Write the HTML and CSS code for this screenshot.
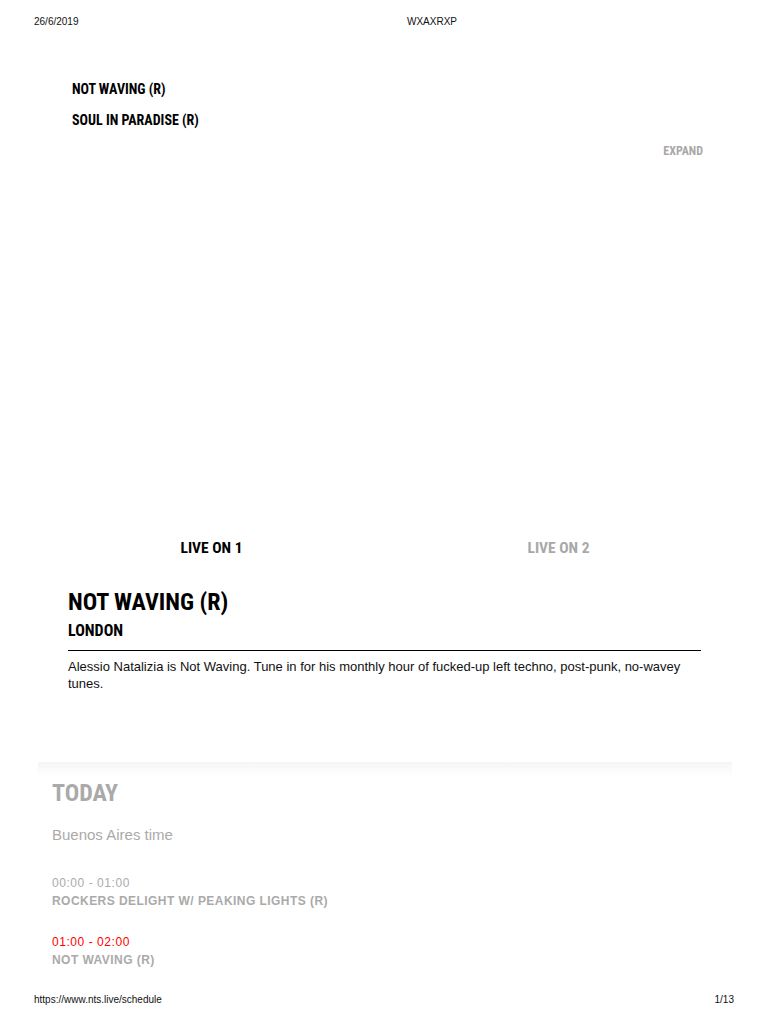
FILE: index.html
```html
<!DOCTYPE html>
<html lang="en">
<head>
<meta charset="utf-8">
<title>WXAXRXP</title>
<link rel="stylesheet" href="styles.css">
</head>
<body>
<header class="print-header">
  <span class="ph-date">26/6/2019</span>
  <span class="ph-title">WXAXRXP</span>
</header>

<nav class="nav-list">
  <div class="nav-item">NOT WAVING (R)</div>
  <div class="nav-item">SOUL IN PARADISE (R)</div>
</nav>
<div class="expand-row"><span class="expand">EXPAND</span></div>

<div class="player-space"></div>

<div class="live-tabs">
  <div class="live-tab active">LIVE ON 1</div>
  <div class="live-tab">LIVE ON 2</div>
</div>

<section class="show">
  <h1 class="show-title">NOT WAVING (R)</h1>
  <div class="show-location">LONDON</div>
  <p class="show-desc">Alessio Natalizia is Not Waving. Tune in for his monthly hour of fucked-up left techno, post-punk, no-wavey tunes.</p>
</section>

<section class="schedule">
  <h2 class="sched-day">TODAY</h2>
  <div class="sched-tz">Buenos Aires time</div>
  <div class="slot">
    <div class="slot-time">00:00 - 01:00</div>
    <div class="slot-name">ROCKERS DELIGHT W/ PEAKING LIGHTS (R)</div>
  </div>
  <div class="slot">
    <div class="slot-time now">01:00 - 02:00</div>
    <div class="slot-name">NOT WAVING (R)</div>
  </div>
</section>

<footer class="print-footer">
  <span>https://www.nts.live/schedule</span>
  <span>1/13</span>
</footer>
</body>
</html>
```

FILE: styles.css
```css
html, body {
  margin: 0;
  padding: 0;
  background: #fff;
}
body {
  width: 768px;
  height: 1024px;
  overflow: hidden;
  font-family: "Liberation Sans", Arial, sans-serif;
  color: #000;
}

.print-header {
  display: flex;
  padding: 16px 34px 0 34px;
  font-size: 10px;
  line-height: 12px;
  color: #111;
}
.ph-date { width: 373px; }

.nav-list {
  margin-top: 46px;
  padding-left: 72px;
}
.nav-item {
  font-family: "Roboto Condensed", Roboto, sans-serif;
  font-stretch: 75%;
  font-weight: bold;
  font-size: 14px;
  line-height: 31px;
}

.expand-row {
  margin-top: 9px;
  padding-right: 65px;
  text-align: right;
  font-size: 12px;
  line-height: 12px;
}
.expand {
  font-family: "Roboto Condensed", Roboto, sans-serif;
  font-stretch: 75%;
  font-weight: bold;
  color: #a8a8a8;
}

.player-space { height: 381px; }

.live-tabs {
  display: grid;
  grid-template-columns: 1fr 1fr;
  margin: 0 36px 0 38px;
}
.live-tab {
  text-align: center;
  font-family: "Roboto Condensed", Roboto, sans-serif;
  font-stretch: 75%;
  font-weight: bold;
  font-size: 15.5px;
  line-height: 20px;
  color: #a8a8a8;
}
.live-tab.active { color: #000; }

.show {
  margin: 30px 67px 0 68px;
}
.show-title {
  margin: 0;
  font-family: "Roboto Condensed", Roboto, sans-serif;
  font-stretch: 75%;
  font-weight: bold;
  font-size: 24px;
  line-height: 28px;
}
.show-location {
  margin-top: 5px;
  padding-bottom: 10px;
  border-bottom: 1px solid #000;
  font-family: "Roboto Condensed", Roboto, sans-serif;
  font-stretch: 75%;
  font-weight: bold;
  font-size: 16px;
  line-height: 19px;
}
.show-desc {
  margin: 7px 0 0 0;
  font-size: 13px;
  line-height: 17px;
  color: #111;
}

.schedule {
  margin: 70px 36px 0 38px;
  padding: 18px 14px 0 14px;
  background: linear-gradient(#f5f5f5 0, #fbfbfb 8px, #fff 16px);
}
.sched-day {
  margin: 0;
  font-family: "Roboto Condensed", Roboto, sans-serif;
  font-stretch: 75%;
  font-weight: bold;
  font-size: 24px;
  line-height: 26px;
  color: #aaa;
}
.sched-tz {
  margin-top: 20px;
  font-size: 15px;
  line-height: 18px;
  color: #aaa;
}
.slot { margin-top: 31px; }
.slot + .slot { margin-top: 25px; }
.slot-time {
  font-size: 12px;
  line-height: 16px;
  letter-spacing: 0.55px;
  color: #aaa;
}
.slot-time.now { color: #f00; }
.slot-name {
  margin-top: 2px;
  font-size: 12px;
  line-height: 16px;
  font-weight: bold;
  letter-spacing: 0.45px;
  color: #aaa;
}

.print-footer {
  display: flex;
  justify-content: space-between;
  margin-top: 26px;
  padding: 0 34px;
  font-size: 10px;
  line-height: 12px;
  color: #111;
}
```
